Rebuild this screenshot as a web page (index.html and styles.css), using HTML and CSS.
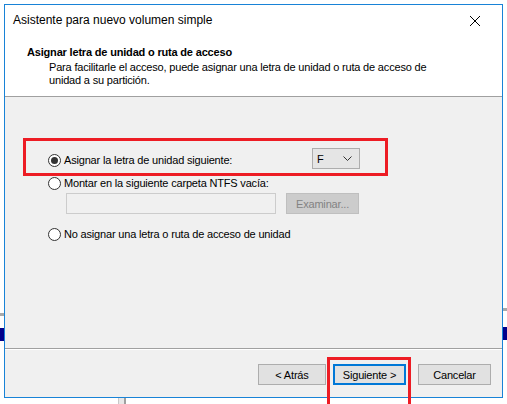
FILE: index.html
```html
<!DOCTYPE html>
<html lang="es">
<head>
<meta charset="utf-8">
<title>Asistente para nuevo volumen simple</title>
<link rel="stylesheet" href="styles.css">
</head>
<body>
<div class="desktop">
  <div class="bg-stripe bg-gray-left"></div>
  <div class="bg-stripe bg-navy-left"></div>
  <div class="bg-stripe bg-gray-right"></div>
  <div class="bg-stripe bg-navy-right"></div>
  <div class="bg-vline"></div>
  <div class="window">
    <div class="titlebar">
      <span class="title">Asistente para nuevo volumen simple</span>
      <svg class="close" width="12" height="12" viewBox="0 0 12 12"><path d="M1 1 L11 11 M11 1 L1 11" stroke="#000" stroke-width="1" fill="none"/></svg>
    </div>
    <div class="header">
      <div class="header-title">Asignar letra de unidad o ruta de acceso</div>
      <div class="header-sub">Para facilitarle el acceso, puede asignar una letra de unidad o ruta de acceso de<br>unidad a su partición.</div>
    </div>
    <div class="content">
      <div class="row row-first">
        <span class="radio checked"></span>
        <span class="label">Asignar la letra de unidad siguiente:</span>
        <div class="combo">
          <span class="combo-value">F</span>
          <svg class="chev" width="9" height="5" viewBox="0 0 9 5"><path d="M0.5 0.5 L4.5 4.5 L8.5 0.5" stroke="#333" stroke-width="1" fill="none"/></svg>
        </div>
      </div>
      <div class="row row-second">
        <span class="radio"></span>
        <span class="label">Montar en la siguiente carpeta NTFS vacía:</span>
      </div>
      <div class="field-row">
        <div class="textfield"></div>
        <div class="btn disabled">Examinar...</div>
      </div>
      <div class="row row-third">
        <span class="radio"></span>
        <span class="label">No asignar una letra o ruta de acceso de unidad</span>
      </div>
    </div>
    <div class="footer">
      <div class="btn btn-back">&lt; Atrás</div>
      <div class="btn btn-default">Siguiente &gt;</div>
      <div class="btn btn-cancel">Cancelar</div>
    </div>
  </div>
  <div class="mark mark-radio"></div>
  <div class="mark mark-next"></div>
</div>
</body>
</html>
```

FILE: styles.css
```css
html, body {
  margin: 0;
  padding: 0;
  background: #ffffff;
}

.desktop {
  position: relative;
  width: 507px;
  height: 404px;
  overflow: hidden;
  padding: 4px 0 0 4px;
  box-sizing: border-box;
  background: #ffffff;
  font-family: "Liberation Sans", Arial, sans-serif;
  font-size: 11px;
  letter-spacing: -0.18px;
  color: #000;
}

.bg-stripe {
  position: absolute;
  height: 3px;
  background: #a9a9a9;
}
.bg-gray-left { left: 0; top: 313px; width: 5px; }
.bg-navy-left { left: 0; top: 328px; width: 5px; height: 13px; background: #00008b; }
.bg-gray-right { right: 0; top: 308px; width: 6px; }
.bg-navy-right { right: 0; top: 327px; width: 6px; height: 13px; background: #00008b; }
.bg-vline {
  position: absolute;
  left: 118px;
  top: 396px;
  width: 8px;
  height: 8px;
  border-left: 1px solid #c8c8c8;
  border-right: 2px solid #a0a0a0;
  box-sizing: border-box;
  background: #e8e8e8;
}

.window {
  position: relative;
  width: 499px;
  height: 394px;
  box-sizing: border-box;
  border: 1px solid #1883d7;
  background: #f0f0f0;
  display: flex;
  flex-direction: column;
}

.titlebar {
  height: 31px;
  flex: none;
  background: #fff;
  display: flex;
  align-items: center;
  justify-content: space-between;
  padding: 0 21px 0 8px;
}
.title {
  font-size: 12px;
  letter-spacing: 0;
  line-height: 31px;
}
.close { display: block; }

.header {
  height: 61px;
  flex: none;
  box-sizing: border-box;
  background: #fff;
  border-bottom: 1px solid #a0a0a0;
  padding: 9px 0 0 22px;
}
.header-title {
  font-weight: bold;
  line-height: 14px;
}
.header-sub {
  margin: 2px 0 0 22px;
  line-height: 13px;
}

.content {
  height: 252px;
  flex: none;
  box-sizing: border-box;
  border-bottom: 1px solid #a0a0a0;
  padding: 51px 0 0 43px;
  display: flex;
  flex-direction: column;
}

.row {
  display: flex;
  align-items: center;
}
.row-first {
  width: 312px;
  height: 21px;
}
.row-second { margin-top: 7px; height: 14px; }
.row-third { margin-top: 13px; height: 14px; }

.radio {
  width: 13px;
  height: 13px;
  box-sizing: border-box;
  border: 1px solid #333;
  border-radius: 50%;
  background: #fff;
  margin-right: 3px;
  display: flex;
  align-items: center;
  justify-content: center;
  flex: none;
}
.row-first .radio { margin-top: 3px; }
.row-first .label { margin-top: 3px; }
.radio.checked::after {
  content: "";
  width: 7px;
  height: 7px;
  border-radius: 50%;
  background: #333;
}

.combo {
  margin-left: auto;
  width: 48px;
  height: 21px;
  box-sizing: border-box;
  border: 1px solid #adadad;
  background: #e5e5e5;
  display: flex;
  align-items: center;
  justify-content: space-between;
  padding: 0 7px 0 4px;
}
.combo-value { font-size: 11px; }
.chev { display: block; }

.field-row {
  display: flex;
  margin-top: 3px;
  padding-left: 18px;
  gap: 10px;
}
.textfield {
  width: 210px;
  height: 21px;
  box-sizing: border-box;
  border: 1px solid #cccccc;
  background: #f0f0f0;
}

.btn {
  height: 21px;
  box-sizing: border-box;
  border: 1px solid #adadad;
  background: #e1e1e1;
  display: flex;
  align-items: center;
  justify-content: center;
  width: 73px;
}
.btn.disabled {
  background: #cccccc;
  border-color: #bfbfbf;
  color: #838383;
}

.footer {
  flex: 1;
  border-top: 1px solid #fff;
  display: flex;
  align-items: flex-start;
  padding: 14px 0 0 253px;
}
.btn-back { width: 68px; }
.btn-default {
  margin-left: 7px;
  border: 2px solid #0078d7;
}
.btn-cancel { margin-left: 12px; }

.mark {
  position: absolute;
  border: 3px solid #ed1c24;
  box-sizing: border-box;
}
.mark-radio {
  left: 23px;
  top: 138px;
  width: 365px;
  height: 38px;
}
.mark-next {
  left: 327px;
  top: 357px;
  width: 84px;
  height: 52px;
}
```
